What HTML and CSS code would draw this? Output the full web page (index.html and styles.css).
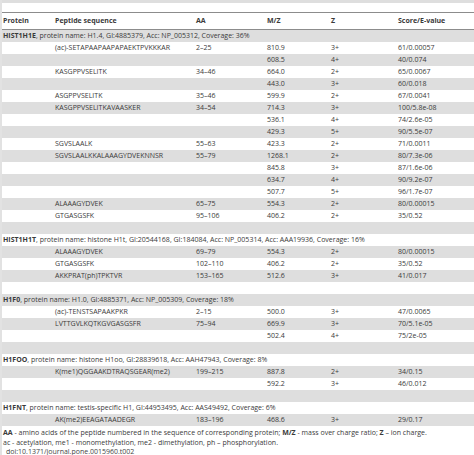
FILE: index.html
```html
<!DOCTYPE html>
<html>
<head>
<meta charset="utf-8">
<link rel="stylesheet" href="styles.css">
</head>
<body>
<div class="page">
  <div class="topstrip"></div>
  <div class="gap"></div>
  <table class="tbl">
    <colgroup>
      <col class="c1"><col class="c2"><col class="c3"><col class="c4"><col class="c5"><col class="c6">
    </colgroup>
    <thead>
      <tr class="head"><th>Protein</th><th>Peptide sequence</th><th>AA</th><th>M/Z</th><th>Z</th><th>Score/E-value</th></tr>
    </thead>
    <tbody>
      <tr class="g"><td colspan="6"><b>HIST1H1E</b>, protein name: H1.4, GI:4885379, Acc: NP_005312, Coverage: 36%</td></tr>
      <tr><td></td><td>(ac)-SETAPAAPAAPAPAEKTPVKKKAR</td><td>2–25</td><td>810.9</td><td>3+</td><td>61/0.00057</td></tr>
      <tr class="g"><td></td><td></td><td></td><td>608.5</td><td>4+</td><td>40/0.074</td></tr>
      <tr><td></td><td>KASGPPVSELITK</td><td>34–46</td><td>664.0</td><td>2+</td><td>65/0.0067</td></tr>
      <tr class="g"><td></td><td></td><td></td><td>443.0</td><td>3+</td><td>60/0.018</td></tr>
      <tr><td></td><td>ASGPPVSELITK</td><td>35–46</td><td>599.9</td><td>2+</td><td>67/0.0041</td></tr>
      <tr class="g"><td></td><td>KASGPPVSELITKAVAASKER</td><td>34–54</td><td>714.3</td><td>3+</td><td>100/5.8e-08</td></tr>
      <tr><td></td><td></td><td></td><td>536.1</td><td>4+</td><td>74/2.6e-05</td></tr>
      <tr class="g"><td></td><td></td><td></td><td>429.3</td><td>5+</td><td>90/5.5e-07</td></tr>
      <tr><td></td><td>SGVSLAALK</td><td>55–63</td><td>423.3</td><td>2+</td><td>71/0.0011</td></tr>
      <tr class="g"><td></td><td>SGVSLAALKKALAAAGYDVEKNNSR</td><td>55–79</td><td>1268.1</td><td>2+</td><td>80/7.3e-06</td></tr>
      <tr><td></td><td></td><td></td><td>845.8</td><td>3+</td><td>87/1.6e-06</td></tr>
      <tr class="g"><td></td><td></td><td></td><td>634.7</td><td>4+</td><td>90/9.2e-07</td></tr>
      <tr><td></td><td></td><td></td><td>507.7</td><td>5+</td><td>96/1.7e-07</td></tr>
      <tr class="g"><td></td><td>ALAAAGYDVEK</td><td>65–75</td><td>554.3</td><td>2+</td><td>80/0.00015</td></tr>
      <tr><td></td><td>GTGASGSFK</td><td>95–106</td><td>406.2</td><td>2+</td><td>35/0.52</td></tr>
      <tr class="g"><td></td><td></td><td></td><td></td><td></td><td></td></tr>
      <tr><td colspan="6"><b>HIST1H1T</b>, protein name: histone H1t, GI:20544168, GI:184084, Acc: NP_005314, Acc: AAA19936, Coverage: 16%</td></tr>
      <tr class="g"><td></td><td>ALAAAGYDVEK</td><td>69–79</td><td>554.3</td><td>2+</td><td>80/0.00015</td></tr>
      <tr><td></td><td>GTGASGSFK</td><td>102–110</td><td>406.2</td><td>2+</td><td>35/0.52</td></tr>
      <tr class="g"><td></td><td>AKKPRAT(ph)TPKTVR</td><td>153–165</td><td>512.6</td><td>3+</td><td>41/0.017</td></tr>
      <tr><td></td><td></td><td></td><td></td><td></td><td></td></tr>
      <tr class="g"><td colspan="6"><b>H1F0</b>, protein name: H1.0, GI:4885371, Acc: NP_005309, Coverage: 18%</td></tr>
      <tr><td></td><td>(ac)-TENSTSAPAAKPKR</td><td>2–15</td><td>500.0</td><td>3+</td><td>47/0.0065</td></tr>
      <tr class="g"><td></td><td>LVTTGVLKQTKGVGASGSFR</td><td>75–94</td><td>669.9</td><td>3+</td><td>70/5.1e-05</td></tr>
      <tr><td></td><td></td><td></td><td>502.4</td><td>4+</td><td>75/2e-05</td></tr>
      <tr class="g"><td></td><td></td><td></td><td></td><td></td><td></td></tr>
      <tr><td colspan="6"><b>H1FOO</b>, protein name: histone H1oo, GI:28839618, Acc: AAH47943, Coverage: 8%</td></tr>
      <tr class="g"><td></td><td>K(me1)QGGAAKDTRAQSGEAR(me2)</td><td>199–215</td><td>887.8</td><td>2+</td><td>34/0.15</td></tr>
      <tr><td></td><td></td><td></td><td>592.2</td><td>3+</td><td>46/0.012</td></tr>
      <tr class="g"><td></td><td></td><td></td><td></td><td></td><td></td></tr>
      <tr><td colspan="6"><b>H1FNT</b>, protein name: testis-specific H1, GI:44953495, Acc: AAS49492, Coverage: 6%</td></tr>
      <tr class="g"><td></td><td>AK(me2)EEAGATAADEGR</td><td>183–196</td><td>468.6</td><td>3+</td><td>29/0.17</td></tr>
    </tbody>
  </table>
  <div class="notes">
    <p><b>AA</b> - amino acids of the peptide numbered in the sequence of corresponding protein; <b>M/Z</b> - mass over charge ratio; <b>Z</b> – ion charge.</p>
    <p>ac - acetylation, me1 - monomethylation, me2 - dimethylation, ph – phosphorylation.</p>
    <p class="doi">doi:10.1371/journal.pone.0015960.t002</p>
  </div>
</div>
</body>
</html>
```
FILE: styles.css
```css
html, body {
  margin: 0;
  padding: 0;
  background: #ffffff;
}
.page {
  width: 472px;
  height: 455px;
  border-left: 2px solid #e2e2e2;
  font-family: "Open Sans", "DejaVu Sans", sans-serif;
  font-size: 7px;
  color: #3a3a3a;
  overflow: hidden;
}
.topstrip {
  height: 3px;
  background: #dedede;
}
.gap {
  height: 9px;
}
.tbl {
  width: 472px;
  border-collapse: collapse;
  table-layout: fixed;
  border-top: 1px solid #8c8c8c;
}
.c1 { width: 53px; }
.c2 { width: 141px; }
.c3 { width: 71px; }
.c4 { width: 64px; }
.c5 { width: 67px; }
.c6 { width: 76px; }
.tbl th, .tbl td {
  padding: 0;
  text-align: left;
  white-space: nowrap;
  overflow: visible;
  vertical-align: middle;
  line-height: 12px;
  height: 12px;
}
.tbl th:first-child, .tbl td:first-child {
  padding-left: 1px;
}
.head th {
  height: 16px;
  line-height: 16px;
  font-weight: 700;
  border-bottom: 1px solid #8c8c8c;
}
.tbl tr.g td {
  background: #dedede;
}
.notes {
  padding: 2px 0 0 1px;
  font-size: 7px;
}
.notes p {
  margin: 0;
  line-height: 9.5px;
}
.notes b {
  font-weight: 700;
}
.doi {
  padding-left: 3px;
  color: #444444;
}
```
